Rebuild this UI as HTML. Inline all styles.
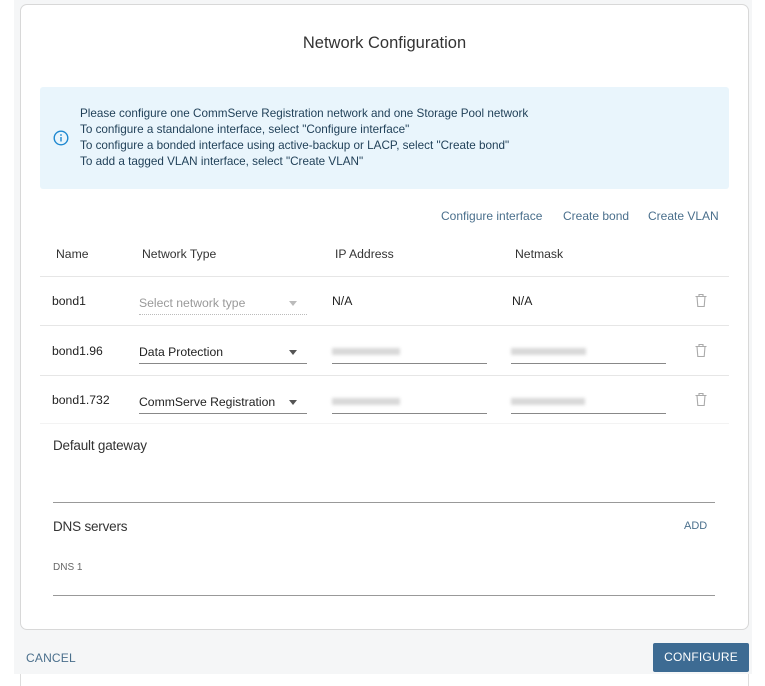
<!DOCTYPE html>
<html><head><style>
*{box-sizing:border-box;margin:0;padding:0}
body{width:765px;height:686px;background:#fff;font-family:"Liberation Sans",sans-serif;position:relative;overflow:hidden;color:#222}
.bg{position:absolute;left:14px;top:0;width:738px;height:674px;background:#f5f6f7}
.card{position:absolute;left:20px;top:4px;width:729px;height:626px;background:#fff;border:1px solid #d8d8d8;border-radius:7px}
.a{position:absolute}
.title{left:0;width:727px;text-align:center;top:29px;font-size:16.5px;color:#333}
.info{left:19px;top:82px;width:689px;height:102px;background:#e9f5fc;border-radius:3px}
.info p{position:absolute;left:40px;top:19px;font-size:11.7px;line-height:16px;color:#1f3f57}
.lnk{font-size:12px;color:#4a6f8c;top:204px}
.th{font-size:12.2px;color:#333;top:242px}
.hr{left:19px;width:689px;height:1px;background:#e6e6e6}
.td{font-size:12.2px;color:#222}
.sel{width:168px;height:24px;border-bottom:1px solid #888;font-size:12.2px}
.sel span{position:absolute;left:0;top:5px}
.sel i{position:absolute;right:10px;top:10px;border:4.5px solid transparent;border-top:5px solid #555;border-bottom:0}
.inp{height:24px;border-bottom:1px solid #888}
.blur{position:absolute;left:0;top:8px;height:7px;background:#d8d8d8;filter:blur(1.5px)}
.bot{position:absolute;left:20px;top:674px;width:729px;height:12px;border-left:1px solid #ddd;border-right:1px solid #ddd}
</style></head><body>
<div class="bg"></div>
<div class="card">
<div class="a title">Network Configuration</div>
<div class="a info">
<svg class="a" style="left:13px;top:43px" width="16" height="16" viewBox="0 0 16 16"><circle cx="8" cy="8" r="6.8" fill="none" stroke="#1e88d0" stroke-width="1.4"/><rect x="7.3" y="7" width="1.4" height="4.5" fill="#1e88d0"/><circle cx="8" cy="5" r="0.9" fill="#1e88d0"/></svg>
<p>Please configure one CommServe Registration network and one Storage Pool network<br>To configure a standalone interface, select "Configure interface"<br>To configure a bonded interface using active-backup or LACP, select "Create bond"<br>To add a tagged VLAN interface, select "Create VLAN"</p>
</div>
<div class="a lnk" style="left:420px">Configure interface</div>
<div class="a lnk" style="left:542px">Create bond</div>
<div class="a lnk" style="left:627px">Create VLAN</div>
<div class="a th" style="left:35px">Name</div>
<div class="a th" style="left:121px">Network Type</div>
<div class="a th" style="left:314px">IP Address</div>
<div class="a th" style="left:494px">Netmask</div>
<div class="a hr" style="top:271px"></div>
<div class="a hr" style="top:320px"></div>
<div class="a hr" style="top:370px"></div>
<div class="a hr" style="top:418px;background:#f3f3f3"></div>

<div class="a td" style="left:31px;top:289px">bond1</div>
<div class="a sel" style="left:118px;top:286px;border-bottom:1px dotted #bbb;color:#999"><span>Select network type</span><i style="border-top-color:#bbb"></i></div>
<div class="a td" style="left:311px;top:289px">N/A</div>
<div class="a td" style="left:491px;top:289px">N/A</div>

<div class="a td" style="left:31px;top:339px">bond1.96</div>
<div class="a sel" style="left:118px;top:335px"><span>Data Protection</span><i></i></div>
<div class="a inp" style="left:311px;top:335px;width:155px"><div class="blur" style="width:68px"></div></div>
<div class="a inp" style="left:490px;top:335px;width:155px"><div class="blur" style="width:75px"></div></div>

<div class="a td" style="left:31px;top:388px">bond1.732</div>
<div class="a sel" style="left:118px;top:385px"><span>CommServe Registration</span><i></i></div>
<div class="a inp" style="left:311px;top:385px;width:155px"><div class="blur" style="width:68px"></div></div>
<div class="a inp" style="left:490px;top:385px;width:155px"><div class="blur" style="width:74px"></div></div>

<svg class="a" style="left:673px;top:288px" width="14" height="120" viewBox="0 0 14 120"><g fill="none" stroke="#aaa" stroke-width="1.1"><path d="M1.5 3.5h11M5 3.5V1.5h4v2M3 3.5l.8 10h6.4l.8-10"/><g transform="translate(0,50)"><path d="M1.5 3.5h11M5 3.5V1.5h4v2M3 3.5l.8 10h6.4l.8-10"/></g><g transform="translate(0,99)"><path d="M1.5 3.5h11M5 3.5V1.5h4v2M3 3.5l.8 10h6.4l.8-10"/></g></g></svg>

<div class="a" style="left:32px;top:433px;font-size:13.5px;color:#333;letter-spacing:-.2px">Default gateway</div>
<div class="a" style="left:32px;top:497px;width:662px;height:1px;background:#999"></div>
<div class="a" style="left:32px;top:514px;font-size:13.5px;color:#333;letter-spacing:-.2px">DNS servers</div>
<div class="a" style="left:663px;top:515px;font-size:11px;color:#4a6f8c">ADD</div>
<div class="a" style="left:32px;top:557px;font-size:10px;color:#666">DNS 1</div>
<div class="a" style="left:32px;top:590px;width:662px;height:1px;background:#999"></div>
</div>
<div class="a" style="left:26px;top:651px;font-size:12px;color:#4a6f8c;letter-spacing:.2px">CANCEL</div>
<div class="a" style="left:653px;top:643px;width:96px;height:29px;background:#3d6b93;border-radius:2px;color:#fff;font-size:12px;text-align:center;line-height:29px;letter-spacing:.2px">CONFIGURE</div>
<div class="bot"></div>
</body></html>
